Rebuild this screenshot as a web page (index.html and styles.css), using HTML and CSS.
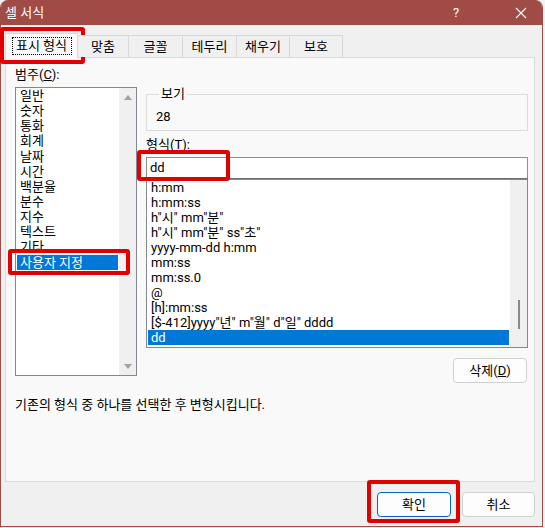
FILE: index.html
```html
<!DOCTYPE html>
<html lang="ko">
<head>
<meta charset="utf-8">
<title>셀 서식</title>
<link rel="stylesheet" href="styles.css">
</head>
<body>
<div class="dialog">
  <div class="titlebar">
    <span class="title">셀 서식</span>
    <span class="help">?</span>
    <span class="close">
      <svg width="12" height="12" viewBox="0 0 12 12"><path d="M1 1L11 11M11 1L1 11" stroke="#fff" stroke-width="1.1" fill="none"/></svg>
    </span>
  </div>
  <div class="main">
    <div class="tabs">
      <div class="tab active"><span class="focus">표시 형식</span></div>
      <div class="tab w51">맞춤</div>
      <div class="tab w54">글꼴</div>
      <div class="tab w54">테두리</div>
      <div class="tab w53">채우기</div>
      <div class="tab w53">보호</div>
    </div>
    <div class="panel">
      <div class="cols">
        <div class="left">
          <div class="label">범주(<u>C</u>):</div>
          <div class="listbox cat">
            <ul class="items">
              <li>일반</li>
              <li>숫자</li>
              <li>통화</li>
              <li>회계</li>
              <li>날짜</li>
              <li>시간</li>
              <li>백분율</li>
              <li>분수</li>
              <li>지수</li>
              <li>텍스트</li>
              <li>기타</li>
              <li class="sel">사용자 지정</li>
            </ul>
            <div class="vscroll">
              <span class="arrow up"></span>
              <span class="arrow down"></span>
            </div>
          </div>
        </div>
        <div class="right">
          <fieldset class="preview">
            <legend>보기</legend>
            <div class="sample">28</div>
          </fieldset>
          <div class="label fmt-label">형식(<u>T</u>):</div>
          <div class="input">dd</div>
          <div class="listbox fmt">
            <ul class="items">
              <li>h:mm</li>
              <li>h:mm:ss</li>
              <li>h"시" mm"분"</li>
              <li>h"시" mm"분" ss"초"</li>
              <li>yyyy-mm-dd h:mm</li>
              <li>mm:ss</li>
              <li>mm:ss.0</li>
              <li>@</li>
              <li>[h]:mm:ss</li>
              <li>[$-412]yyyy"년" m"월" d"일" dddd</li>
              <li class="sel">dd</li>
            </ul>
            <div class="vscroll track">
              <span class="thumb"></span>
            </div>
          </div>
          <div class="btnrow">
            <button class="btn del">삭제(<u>D</u>)</button>
          </div>
        </div>
      </div>
      <p class="desc">기존의 형식 중 하나를 선택한 후 변형시킵니다.</p>
    </div>
    <div class="footer">
      <button class="btn ok">확인</button>
      <button class="btn cancel">취소</button>
    </div>
  </div>
</div>
<div class="mark m-tab"></div>
<div class="mark m-cat"></div>
<div class="mark m-input"></div>
<div class="mark m-ok"></div>
</body>
</html>
```

FILE: styles.css
```css
* { box-sizing: border-box; }
html, body { margin: 0; padding: 0; }
body {
  position: relative;
  width: 545px;
  height: 528px;
  background: #f3f3f3;
  font-family: Roboto, "Noto Sans CJK KR", sans-serif;
  font-size: 13px;
  color: #000;
  overflow: hidden;
}
.dialog {
  width: 543px;
  height: 527px;
  background: #f0f0f0;
  border: 1px solid #a04b45;
  border-top: 0;
  border-radius: 8px 8px 0 0;
  display: flex;
  flex-direction: column;
  overflow: hidden;
}
.titlebar {
  height: 25px;
  flex: none;
  background: #a04b45;
  color: #fff;
  display: flex;
  align-items: center;
  padding-left: 4px;
  line-height: 16px;
}
.title { flex: 1; }
.help { width: 14px; text-align: center; margin-right: 52px; font-size: 13px; }
.close { width: 12px; height: 12px; margin-right: 15px; display: flex; }
.main {
  flex: 1;
  padding: 8px 7px 0 4px;
  display: flex;
  flex-direction: column;
}
.tabs {
  display: flex;
  height: 24px;
  align-items: flex-end;
  position: relative;
  z-index: 1;
}
.tab {
  height: 22px;
  border-top: 1px solid #d9d9d9;
  border-right: 1px solid #d9d9d9;
  background: #f0f0f0;
  display: flex;
  align-items: center;
  justify-content: center;
  line-height: 16px;
  padding-top: 1px;
}
.w51 { width: 51px; }
.w53 { width: 53px; }
.w54 { width: 54px; }
.tab.active {
  width: 73px;
  height: 25px;
  margin-bottom: -1px;
  border-left: 1px solid #d9d9d9;
  background: #f9f9f9;
  padding-top: 0;
}
.focus {
  width: 60px;
  height: 18px;
  border: 1px dotted #000;
  display: flex;
  align-items: center;
  justify-content: center;
}
.panel {
  width: 530px;
  height: 425px;
  flex: none;
  border: 1px solid #dadada;
  background: #f9f9f9;
  padding: 9px 0 0 9px;
}
.cols {
  display: grid;
  grid-template-columns: 122px 382px;
  column-gap: 9px;
  align-items: start;
}
.label { line-height: 16px; height: 16px; }
.left .label { margin-bottom: 4px; }
.listbox {
  border: 1px solid #828790;
  background: #fff;
  display: flex;
}
.listbox.cat { height: 289px; }
.items {
  list-style: none;
  margin: 0;
  padding: 0 1px;
  flex: 1;
  min-width: 0;
}
.items li {
  line-height: 15.15px;
  height: 15.15px;
  padding-left: 3px;
  white-space: nowrap;
}
.items li.sel { background: #0078d7; color: #fff; }
.vscroll {
  width: 17px;
  flex: none;
  background: #f0f0f0;
  display: flex;
  flex-direction: column;
  justify-content: space-between;
  align-items: center;
  padding: 7px 0 6px;
}
.arrow {
  width: 0;
  height: 0;
  border-left: 4px solid transparent;
  border-right: 4px solid transparent;
}
.arrow.up { border-bottom: 5px solid #a3a3a3; }
.arrow.down { border-top: 5px solid #a3a3a3; }
.preview {
  margin: 19px 0 0;
  padding: 0 0 3px 9px;
  border: 1px solid #dcdcdc;
  height: 45px;
  min-width: 0;
}
.preview legend {
  padding: 0 2px;
  margin-left: 3px;
  line-height: 16px;
}
.sample { line-height: 16px; padding-top: 7px; }
.fmt-label { margin-top: 6px; }
.input {
  margin-top: 4px;
  height: 22px;
  border: 1px solid #8f8f8f;
  border-bottom-color: #6f6f6f;
  background: #fff;
  line-height: 19px;
  padding-left: 3px;
}
.listbox.fmt { height: 169px; }
.listbox.fmt .items li { line-height: 15px; height: 15px; }
.track {
  justify-content: flex-end;
  padding: 0 0 18px;
}
.thumb {
  width: 2px;
  height: 29px;
  background: #8a8a8a;
  margin-left: 1px;
}
.btnrow {
  display: flex;
  justify-content: flex-end;
  margin-top: 10px;
  padding-right: 1px;
}
.btn {
  font-family: inherit;
  font-size: 13px;
  color: #000;
  background: #fdfdfd;
  border: 1px solid #d0d0d0;
  border-radius: 4px;
  height: 25px;
  padding: 0;
  line-height: 16px;
}
.del { width: 74px; }
.desc {
  margin: 14px 0 0;
  line-height: 16px;
}
.footer {
  display: flex;
  justify-content: flex-end;
  gap: 11px;
  margin-top: 10px;
}
.ok { width: 74px; border-color: #0067c0; box-shadow: inset 0 0 0 1px #fff; }
.cancel { width: 73px; }
.mark {
  position: absolute;
  border: 4px solid #e00000;
  border-radius: 3px;
}
.m-tab { left: 0; top: 27px; width: 85px; height: 37px; }
.m-cat { left: 8px; top: 249px; width: 122px; height: 26px; }
.m-input { left: 137px; top: 150px; width: 93px; height: 31px; }
.m-ok { left: 367px; top: 480px; width: 93px; height: 43px; }
```
